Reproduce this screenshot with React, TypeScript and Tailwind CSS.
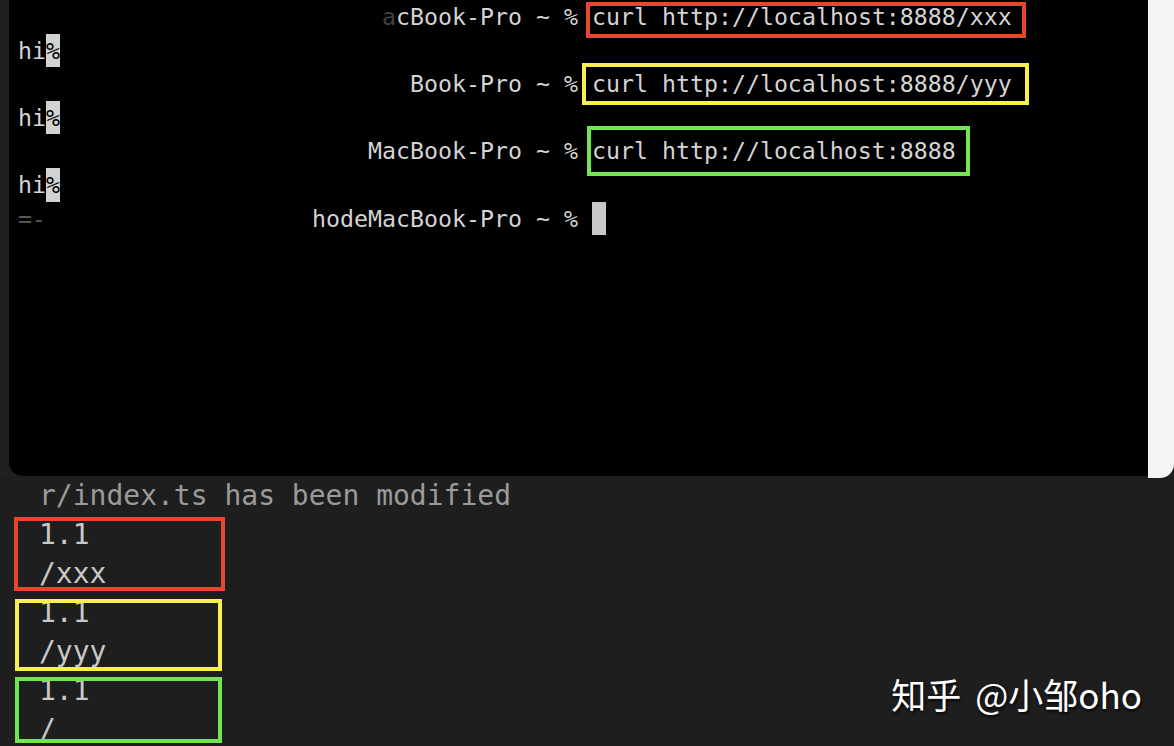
const mono = "font-['DejaVu_Sans_Mono','Liberation_Mono',monospace]";

const Hi = () => (
  <div className="whitespace-pre">
    hi<span className="inline-block h-[33.6px] bg-[#d2d2d2] text-black align-top">%</span>
  </div>
);

const Boxed = ({ text, box }: { text: string; box: string }) => (
  <span className="relative inline-block align-top">
    {text}
    <span className={`absolute border-4 ${box}`} />
  </span>
);

const App = () => {
  return (
    <div className="relative w-[1174px] h-[746px] overflow-hidden bg-[#1e1e1e]">
      <div className="flex h-[476px]">
        <div className="w-[9px] bg-[#202020]" />
        <div
          className={`flex-1 bg-black rounded-bl-[14px] pl-[9px] text-[23.25px] leading-[33.6px] text-[#d4d4d4] ${mono}`}
        >
          <div className="whitespace-pre">
            {"                          "}
            <span className="opacity-30">a</span>
            {"cBook-Pro ~ % "}
            <Boxed
              text="curl http://localhost:8888/xxx"
              box="-left-[6px] -right-[14px] top-[2px] -bottom-[4px] border-[#e5472e]"
            />
          </div>
          <Hi />
          <div className="whitespace-pre">
            {"                            Book-Pro ~ % "}
            <Boxed
              text="curl http://localhost:8888/yyy"
              box="-left-[10px] -right-[17px] -top-[4px] -bottom-[4px] border-[#f8f04e]"
            />
          </div>
          <Hi />
          <div className="whitespace-pre">
            {"                         MacBook-Pro ~ % "}
            <Boxed
              text="curl http://localhost:8888"
              box="-left-[5px] -right-[14px] -top-[8px] -bottom-[8px] border-[#72e652]"
            />
          </div>
          <Hi />
          <div className="whitespace-pre">
            <span className="opacity-40">{"=-"}</span>
            {"                   hodeMacBook-Pro ~ % "}
            <span className="inline-block w-[14px] h-[33.6px] bg-[#c8c8c8] align-top" />
          </div>
        </div>
        <div className="w-[26px] h-[478px] bg-[#f4f4f4] rounded-br-[14px]" />
      </div>

      <div className={`pl-[39px] text-[28px] leading-[39px] text-[#c8c8c8] ${mono}`}>
        <div className="whitespace-pre text-[#9a9a9a]">r/index.ts has been modified</div>
        <div className="relative">
          <div>1.1</div>
          <div>/xxx</div>
          <div className="absolute -left-[25px] top-[1.5px] w-[211px] h-[74px] border-4 border-[#e5472e]" />
        </div>
        <div className="relative">
          <div>1.1</div>
          <div>/yyy</div>
          <div className="absolute -left-[24px] top-[5.5px] w-[207px] h-[72px] border-4 border-[#f8f04e]" />
        </div>
        <div className="relative">
          <div>1.1</div>
          <div>/</div>
          <div className="absolute -left-[24px] top-[5.5px] w-[207px] h-[66px] border-4 border-[#72e652]" />
        </div>
      </div>

      <div className="absolute right-[32px] top-[670px] flex gap-[14px] text-[35px] leading-[48px] text-white font-['Noto_Sans_CJK_SC','Noto_Sans',sans-serif] [text-shadow:1px_2px_3px_rgba(0,0,0,0.85)]">
        <span>知乎</span>
        <span>@小邹oho</span>
      </div>
    </div>
  );
};

export default App;
